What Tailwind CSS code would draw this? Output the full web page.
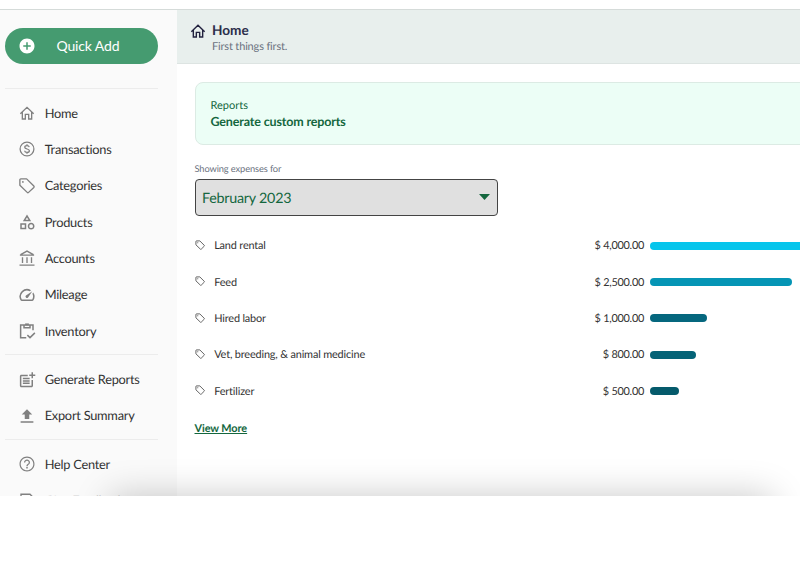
<!DOCTYPE html>
<html lang="en">
<head>
    <meta charset="UTF-8">
    <meta name="viewport" content="width=device-width, initial-scale=1.0">
    <title>Home</title>
    <script src="https://cdn.jsdelivr.net/npm/@tailwindcss/browser@4"></script>
</head>
<body class="bg-white font-[Lato,sans-serif] text-[#333] overflow-hidden [text-rendering:geometricPrecision]">
    <div class="relative h-[586px] w-[800px] overflow-hidden pt-[9px]">
        <div class="flex h-[487px] overflow-hidden border-t border-[#d5dbd9]">
            <!-- Sidebar -->
            <aside class="w-[176.5px] shrink-0 bg-[#fafafa] pl-[5px] pr-[18px] pt-[18px]">
                <button class="flex h-[36px] w-[153px] items-center rounded-full bg-[#459b70] pl-[12.500px] text-white">
                    <svg class="size-[18px]" viewBox="0 0 24 24" fill="currentColor"><path d="M12 2C6.480 2 2 6.480 2 12s4.480 10 10 10 10-4.480 10-10S17.520 2 12 2zm5 11h-4v4h-2v-4H7v-2h4V7h2v4h4v2z"/></svg>
                    <span class="ml-[21px] pb-px text-[14px] tracking-[-0.15px]">Quick Add</span>
                </button>
                <nav id="menu" class="mt-[24px]"></nav>
            </aside>

            <!-- Content -->
            <main class="min-w-0 flex-1">
                <header class="flex h-[54px] border-b border-[#dde4e2] bg-[#e8efed] pl-[13px] pt-[12px]">
                    <svg class="mt-[0.500px] size-4 text-[#22223f]" viewBox="0 0 24 24" fill="none" stroke="currentColor" stroke-width="2.100"><path d="M2 13L12 3.500 22 13M5 10.500V21h4.500v-7h5v7H19V10.500"/></svg>
                    <div class="ml-[6.500px]">
                        <h1 class="text-[13.600px] leading-[17px] font-bold text-[#2b2d4a]">Home</h1>
                        <p class="mt-px text-[11px] leading-[14px] tracking-[-0.16px] text-[#6b7280]">First things first.</p>
                    </div>
                </header>

                <section class="pl-[18px] pt-[18px]">
                    <div class="-mr-4 h-[63px] rounded-[8px] border border-[#dcebe4] bg-[#ecfef6] pl-[15px] pt-[14.500px] text-[#14673e]">
                        <p class="text-[11px] leading-[15px]">Reports</p>
                        <p class="text-[12.500px] leading-[17px] font-bold tracking-[-0.15px]">Generate custom reports</p>
                    </div>

                    <p class="mt-[17px] text-[9.300px] leading-[13px] tracking-[-0.12px] text-[#6b7280]">Showing expenses for</p>
                    <div class="mt-[4px] flex h-[36.500px] w-[303px] items-center justify-between rounded-[4px] border border-[#444] bg-[#e0e0e0] pl-[6.500px] pr-[7px] text-[#14673e]">
                        <span class="pt-[2px] text-[14.3px] tracking-[-0.24px]">February 2023</span>
                        <svg class="h-[6px] w-[11px]" viewBox="0 0 11 6" fill="currentColor"><path d="M0 0h11L5.500 6z"/></svg>
                    </div>

                    <div id="expenses" class="mt-[12px]"></div>
                    <a class="mt-[12.500px] block text-[10.900px] leading-[14px] font-bold tracking-[-0.08px] text-[#14673e] underline">View More</a>
                </section>
            </main>
        </div>

        <!-- Bottom sheet with its shadow -->
        <div class="absolute left-[110px] top-[496px] h-[90px] w-[662px] shadow-[0_0_36px_rgba(0,0,0,0.22)]"></div>
        <div class="absolute inset-x-0 top-[496px] h-[90px] bg-white"></div>
    </div>

    <script>
        const icons = {
            home: `<svg class="size-4" viewBox="0 0 24 24" fill="none" stroke="currentColor" stroke-width="2"><path d="M2 13L12 3.500 22 13M5 10.500V21h4.500v-7h5v7H19V10.500"/></svg>`,
            dollar: `<svg class="size-[18px]" viewBox="0 0 24 24" fill="none" stroke="currentColor" stroke-width="1.7"><circle cx="12" cy="12" r="9.200"/><path d="M15 9.500c-.3-1.300-1.400-1.900-3-1.900s-3 .7-3 2.100c0 3.200 6.200 1.400 6.200 4.600 0 1.500-1.400 2.200-3.200 2.200s-3-.8-3.200-2.200M12 5.800v1.800M12 16.500v1.800"/></svg>`,
            tag: `<svg class="size-[18px]" viewBox="0 0 24 24" fill="none" stroke="currentColor" stroke-width="1.8" stroke-linejoin="round"><path d="M2.500 3.700v7.300L12.300 20.500a1.300 1.300 0 0 0 1.800 0l7-6.600a1.300 1.300 0 0 0 0-1.800L11.500 2.500H3.700A1.200 1.200 0 0 0 2.500 3.700z"/><circle cx="6.500" cy="6.500" r="1.200" fill="currentColor" stroke="none"/></svg>`,
            shapes: `<svg class="size-[18px]" viewBox="0 0 24 24" fill="currentColor"><path d="M12 2l-5.500 9h11L12 2zm0 3.840L13.930 9h-3.870L12 5.840zM17.500 13c-2.490 0-4.500 2.010-4.500 4.500s2.010 4.500 4.500 4.500 4.500-2.010 4.500-4.500-2.010-4.500-4.500-4.500zm0 7a2.500 2.500 0 0 1 0-5 2.500 2.500 0 0 1 0 5zM3 21.500h8v-8H3v8zm2-6h4v4H5v-4z"/></svg>`,
            bank: `<svg class="size-[18px]" viewBox="0 0 24 24" fill="none" stroke="currentColor" stroke-width="1.800"><path d="M2 21.500h20M2.500 8.200h19M3.500 7.600L12 2.800l8.500 4.800M6 11v7.500M12 11v7.500M18 11v7.500"/></svg>`,
            gauge: `<svg class="size-[18px]" viewBox="0 0 24 24" fill="currentColor"><path d="M20.380 8.570l-1.230 1.850a8 8 0 0 1-.22 7.580H5.070A8 8 0 0 1 15.580 6.850l1.850-1.230A10 10 0 0 0 3.350 19a2 2 0 0 0 1.720 1h13.850a2 2 0 0 0 1.740-1 10 10 0 0 0-.27-10.440z"/><path d="M10.590 15.410a2 2 0 0 0 2.830 0l5.660-8.490-8.490 5.660a2 2 0 0 0 0 2.830z"/></svg>`,
            clipboard: `<svg class="size-[18px]" viewBox="0 0 24 24" fill="none" stroke="currentColor" stroke-width="2"><path d="M11 21H3.500V4h16.500v7M12.500 17.500l3.500 3.300 6.500-6.300"/><path d="M8 4v3.500h8V4"/><path d="M9.500 3.200h5" stroke-width="2.600"/></svg>`,
            postAdd: `<svg class="size-[18px]" viewBox="0 0 24 24" fill="currentColor"><path d="M18 19.500H4.500V7H13V5H4.500c-1.100 0-2 .9-2 2v12.500c0 1.100.9 2 2 2H18c1.100 0 2-.9 2-2V12h-2v7.500z"/><path d="M20 1.500h-2v3h-3v2h3v3h2v-3h3v-2h-3v-3zM6.500 9h9v2h-9zM6.500 12.200v2h9v-2h-9zM6.500 15.400h9v2h-9z"/></svg>`,
            upload: `<svg class="size-[18px]" viewBox="0 0 24 24" fill="currentColor"><path d="M9 16h6v-6h4l-7-7-7 7h4zM3.500 19h17v2h-17z"/></svg>`,
            help: `<svg class="size-[18px]" viewBox="0 0 24 24" fill="currentColor"><path d="M11 18h2v-2h-2v2zm1-16C6.480 2 2 6.480 2 12s4.480 10 10 10 10-4.480 10-10S17.520 2 12 2zm0 18.400c-4.600 0-8.400-3.800-8.400-8.400S7.400 3.600 12 3.600s8.400 3.800 8.400 8.400-3.800 8.400-8.400 8.400zM12 6c-2.210 0-4 1.790-4 4h1.700c0-1.200 1-2.300 2.300-2.300s2.300 1.100 2.300 2.300c0 2-3.100 1.750-3.100 5h1.700c0-2.250 3.100-2.500 3.100-5 0-2.210-1.790-4-4-4z"/></svg>`,
            feedback: `<svg class="size-[18px]" viewBox="0 0 24 24" fill="none" stroke="currentColor" stroke-width="1.800"><path d="M4 21V3h12l4 4v14z"/></svg>`,
        };

        const groups = [
            [["home", "Home"], ["dollar", "Transactions"], ["tag", "Categories"], ["shapes", "Products"], ["bank", "Accounts"], ["gauge", "Mileage"], ["clipboard", "Inventory"]],
            [["postAdd", "Generate Reports"], ["upload", "Export Summary"]],
            [["help", "Help Center"], ["feedback", "Give Feedback", "text-[#aaa]"]],
        ];

        const expenses = [
            { name: "Land rental", amount: "$ 4,000.00", width: 227, color: "bg-[#06c5ec]" },
            { name: "Feed", amount: "$ 2,500.00", width: 142, color: "bg-[#0595b5]" },
            { name: "Hired labor", amount: "$ 1,000.00", width: 57, color: "bg-[#05677e]" },
            { name: "Vet, breeding, & animal medicine", amount: "$ 800.00", width: 45.5, color: "bg-[#056377]" },
            { name: "Fertilizer", amount: "$ 500.00", width: 28.5, color: "bg-[#055a6b]" },
        ];

        const menu = document.getElementById("menu");
        groups.forEach(group => {
            const list = document.createElement("ul");
            list.className = "border-t border-[#ececec] w-[153px] pt-[6px] pb-[5.2px]";
            list.innerHTML = group.map(([icon, label, tone = ""]) => `
                <li class="flex h-[36.33px] items-center">
                    <span class="ml-[12.500px] flex w-[19px] text-[#808080] ${icon === "home" ? "pl-px" : ""}">${icons[icon]}</span>
                    <span class="ml-[8.200px] text-[12.8px] tracking-[-0.25px] whitespace-nowrap ${tone}">${label}</span>
                </li>`).join("");
            menu.appendChild(list);
        });

        document.getElementById("expenses").innerHTML = expenses.map(item => `
            <div class="flex h-[36.33px] items-center text-[10.900px]">
                <svg class="size-[11px] text-[#555]" viewBox="0 0 24 24" fill="none" stroke="currentColor" stroke-width="2" stroke-linejoin="round"><path d="M2 3.200v7.300L11.800 20a1.300 1.300 0 0 0 1.800 0l6.600-6.600a1.300 1.300 0 0 0 0-1.800L10.500 2H3.200A1.200 1.200 0 0 0 2 3.200z"/><circle cx="6" cy="6" r="1.300" fill="currentColor" stroke="none"/></svg>
                <span class="ml-[8.700px] flex-1 pt-[2px] tracking-[-0.16px] whitespace-nowrap">${item.name}</span>
                <span class="w-[80px] pt-[2px] text-right tracking-[-0.26px]">${item.amount}</span>
                <div class="ml-[6px] w-[150px]">
                    <div class="h-[8px] rounded-full ${item.color}" style="width: ${item.width}px"></div>
                </div>
            </div>`).join("");
    </script>
</body>
</html>
